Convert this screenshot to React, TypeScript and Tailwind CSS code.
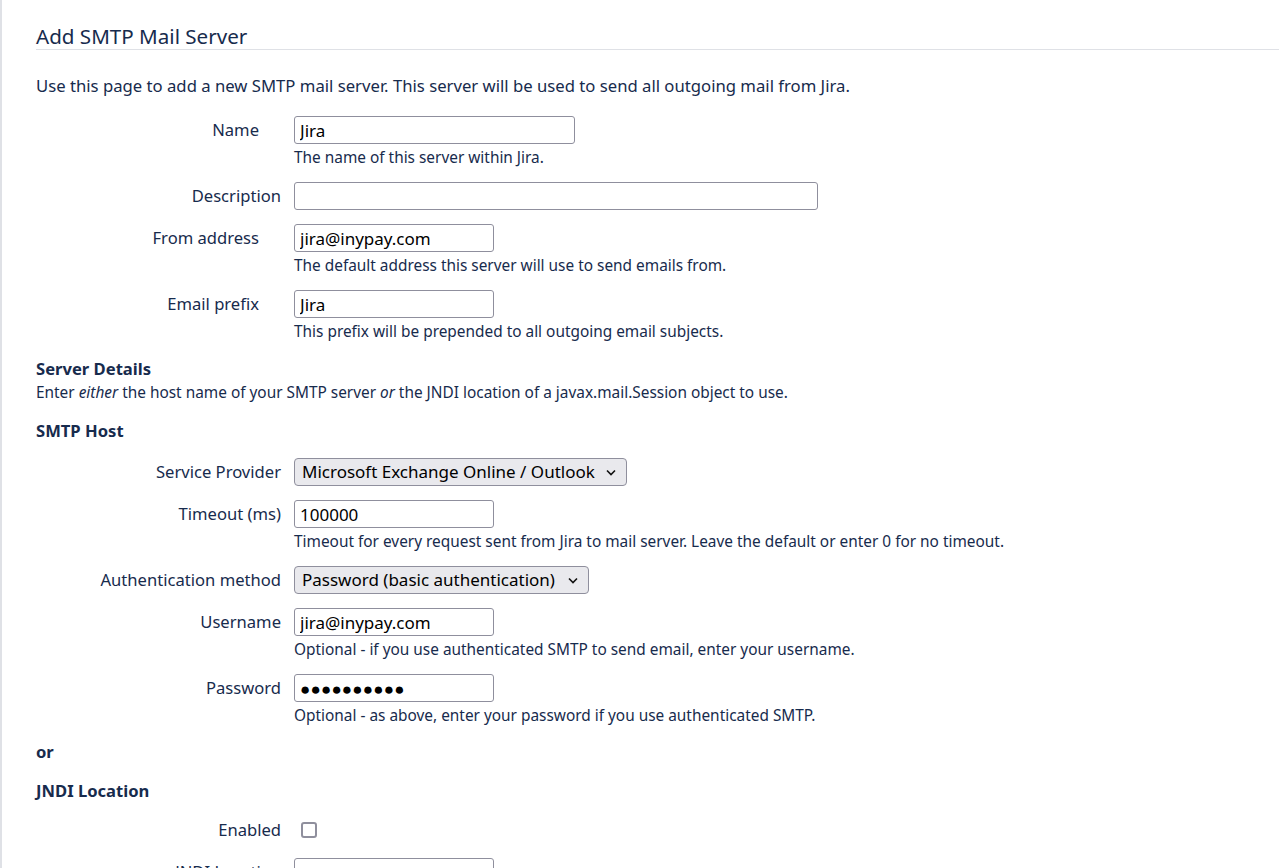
import { ReactNode } from "react"

const font = { fontFamily: '"Noto Sans", "Open Sans", sans-serif' }

function Row({
  label,
  req,
  children,
  help,
}: {
  label: string
  req?: boolean
  children: ReactNode
  help?: string
}) {
  return (
    <div className="flex mb-[14px]">
      <div className={`w-[258px] shrink-0 flex items-start justify-end ${req ? "pr-[35px]" : "pr-[13px]"}`}>
        <span className="h-[28px] flex items-center text-[16.6px] leading-none">{label}</span>
      </div>
      <div className="flex flex-col items-start">
        {children}
        {help && <div className="text-[15.4px] h-[24px] pt-[2px] leading-[24px] whitespace-nowrap">{help}</div>}
      </div>
    </div>
  )
}

function TextInput({ value, w, dots }: { value?: string; w: string; dots?: boolean }) {
  return (
    <input
      type="text"
      readOnly
      defaultValue={value}
      className={`${w} h-[28px] border border-[#8f8f9d] rounded-[3px] px-[5px] ${dots ? "text-[17px] tracking-[0.2px]" : "text-[17px]"} text-black bg-white outline-none`}
      style={font}
    />
  )
}

function Select({ value, w }: { value: string; w: string }) {
  return (
    <div
      className={`${w} h-[28px] border border-[#8f8f9d] rounded-[4px] bg-[#e9e9ed] flex items-center justify-between pl-[7px] pr-[10px] text-[17px] text-black`}
    >
      <span className="whitespace-nowrap">{value}</span>
      <svg width="10" height="7" viewBox="0 0 10 7" className="ml-2 shrink-0">
        <path d="M1 1.5 L5 5.5 L9 1.5" stroke="#111" strokeWidth="1.6" fill="none" />
      </svg>
    </div>
  )
}

export default function App() {
  return (
    <div className="min-h-[868px] bg-white text-[#172b4d] border-l-2 border-[#dfe1e6]" style={font}>
      <div className="pl-[34px]">
        <h1 className="text-[20.6px] leading-[26px] pt-[23px] border-b border-[#dfe1e6]">
          Add SMTP Mail Server
        </h1>
        <p className="text-[16.7px] leading-[24px] mt-[24px] mb-[18px] whitespace-nowrap">
          Use this page to add a new SMTP mail server. This server will be used to send all outgoing mail from Jira.
        </p>

        <Row label="Name" req help="The name of this server within Jira.">
          <TextInput value="Jira" w="w-[281px]" />
        </Row>
        <Row label="Description">
          <TextInput w="w-[524px]" />
        </Row>
        <Row label="From address" req help="The default address this server will use to send emails from.">
          <TextInput value="jira@inypay.com" w="w-[200px]" />
        </Row>
        <Row label="Email prefix" req help="This prefix will be prepended to all outgoing email subjects.">
          <TextInput value="Jira" w="w-[200px]" />
        </Row>

        <h3 className="text-[16.6px] font-bold leading-[22px] mt-[16px]">Server Details</h3>
        <p className="text-[15.4px] leading-[26px] whitespace-nowrap">
          Enter <em>either</em> the host name of your SMTP server <em>or</em> the JNDI location of a javax.mail.Session object to use.
        </p>
        <h3 className="text-[16.6px] font-bold leading-[22px] mt-[14px] mb-[16px]">SMTP Host</h3>

        <Row label="Service Provider">
          <Select value="Microsoft Exchange Online / Outlook" w="w-[333px]" />
        </Row>
        <Row label="Timeout (ms)" help="Timeout for every request sent from Jira to mail server. Leave the default or enter 0 for no timeout.">
          <TextInput value="100000" w="w-[200px]" />
        </Row>
        <Row label="Authentication method">
          <Select value="Password (basic authentication)" w="w-[295px]" />
        </Row>
        <Row label="Username" help="Optional - if you use authenticated SMTP to send email, enter your username.">
          <TextInput value="jira@inypay.com" w="w-[200px]" />
        </Row>
        <Row label="Password" help="Optional - as above, enter your password if you use authenticated SMTP.">
          <TextInput value="●●●●●●●●●●" dots w="w-[200px]" />
        </Row>

        <h3 className="text-[16.6px] font-bold leading-[22px] mt-[15px]">or</h3>
        <h3 className="text-[16.6px] font-bold leading-[22px] mt-[17px] mb-[14px]">JNDI Location</h3>

        <Row label="Enabled">
          <div className="h-[28px] flex items-center pl-[7px]">
            <div className="w-[16px] h-[16px] border-2 border-[#8f8f9d] rounded-[3px]" />
          </div>
        </Row>
        <Row label="JNDI Location">
          <TextInput w="w-[200px]" />
        </Row>
      </div>
    </div>
  )
}
